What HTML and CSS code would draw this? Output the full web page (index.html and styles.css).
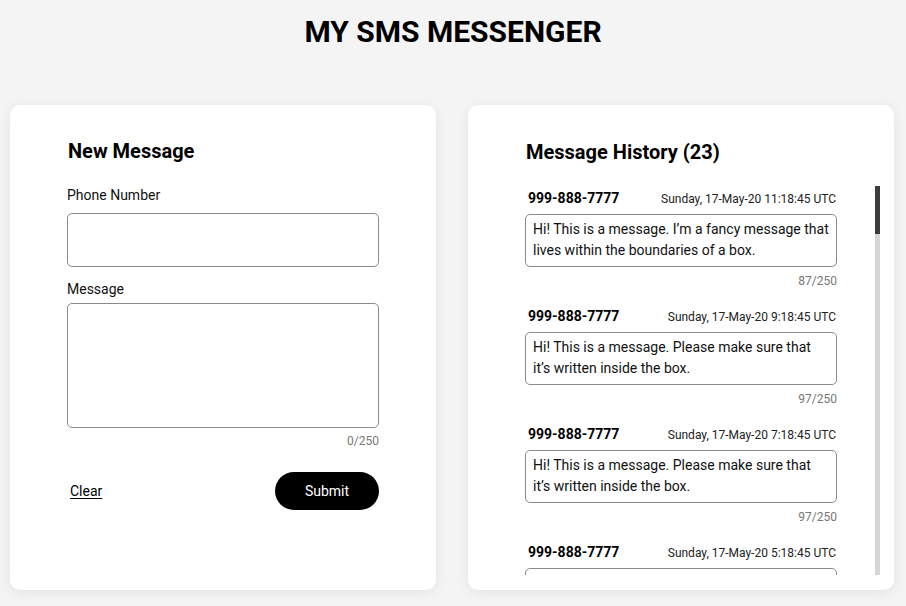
FILE: index.html
```html
<!DOCTYPE html>
<html lang="en">
<head>
<meta charset="utf-8">
<title>My SMS Messenger</title>
<link rel="stylesheet" href="styles.css">
</head>
<body>
<h1 class="page-title">MY SMS MESSENGER</h1>
<main class="panels">
  <section class="card card-form">
    <h2 class="card-title">New Message</h2>
    <label class="field-label label-phone" for="phone">Phone Number</label>
    <input class="text-input" id="phone" type="text">
    <label class="field-label label-message" for="message">Message</label>
    <textarea class="text-area" id="message"></textarea>
    <div class="counter counter-form">0/250</div>
    <div class="actions">
      <button class="btn-clear" type="button">Clear</button>
      <button class="btn-submit" type="button">Submit</button>
    </div>
  </section>
  <section class="card card-history">
    <h2 class="card-title">Message History (23)</h2>
    <div class="history-body">
      <div class="history-list">
        <article class="msg"><div class="msg-head"><span class="msg-phone">999-888-7777</span><span class="msg-date">Sunday, 17-May-20 11:18:45 UTC</span></div><div class="msg-body">Hi! This is a message. I’m a fancy message that lives within the boundaries of a box.</div><div class="counter">87/250</div></article>
        <article class="msg"><div class="msg-head"><span class="msg-phone">999-888-7777</span><span class="msg-date">Sunday, 17-May-20 9:18:45 UTC</span></div><div class="msg-body">Hi! This is a message. Please make sure that it’s written inside the box.</div><div class="counter">97/250</div></article>
        <article class="msg"><div class="msg-head"><span class="msg-phone">999-888-7777</span><span class="msg-date">Sunday, 17-May-20 7:18:45 UTC</span></div><div class="msg-body">Hi! This is a message. Please make sure that it’s written inside the box.</div><div class="counter">97/250</div></article>
        <article class="msg"><div class="msg-head"><span class="msg-phone">999-888-7777</span><span class="msg-date">Sunday, 17-May-20 5:18:45 UTC</span></div><div class="msg-body">Hi! This is a message. Please make sure that it’s written inside the box.</div><div class="counter">97/250</div></article>
      </div>
      <div class="scrollbar" aria-hidden="true"><div class="scrollbar-thumb"></div></div>
    </div>
  </section>
</main>
</body>
</html>
```
FILE: styles.css
```css
* {
  box-sizing: border-box;
}

html, body {
  margin: 0;
  padding: 0;
}

body {
  background: #f4f4f4;
  font-family: Roboto, "Liberation Sans", Arial, sans-serif;
  color: #000;
  height: 606px;
  overflow: hidden;
}

.page-title {
  margin: 0;
  padding-top: 14px;
  font-size: 30px;
  line-height: 35px;
  font-weight: 700;
  text-align: center;
}

.panels {
  display: flex;
  gap: 32px;
  padding: 56px 12px 0 10px;
}

.card {
  width: 426px;
  height: 485px;
  background: #fff;
  border-radius: 10px;
  box-shadow: 0 2px 12px rgba(0, 0, 0, 0.08);
  overflow: hidden;
}

.card-form {
  padding: 34px 57px 0 57px;
}

.card-history {
  padding: 35px 14px 15px 57px;
}

.card-title {
  margin: 0;
  font-size: 20px;
  line-height: 24px;
  font-weight: 700;
  padding-left: 1px;
}

.card-form .card-title {
  margin-bottom: 24px;
}

.card-history .card-title {
  margin-bottom: 22px;
}

.field-label {
  display: block;
  font-size: 14px;
  line-height: 16px;
  color: #111;
}

.label-phone {
  margin-bottom: 10px;
}

.label-message {
  margin-top: 14px;
  margin-bottom: 6px;
}

.text-input,
.text-area {
  display: block;
  width: 100%;
  border: 1px solid #8a8a8a;
  border-radius: 5px;
  background: #fff;
  font-family: inherit;
  font-size: 14px;
  padding: 8px;
  margin: 0;
  outline: none;
  resize: none;
}

.text-input {
  height: 54px;
}

.text-area {
  height: 125px;
}

.counter {
  text-align: right;
  font-size: 12px;
  line-height: 16px;
  color: #777;
}

.counter-form {
  margin-top: 5px;
}

.actions {
  display: flex;
  justify-content: space-between;
  align-items: center;
  margin-top: 23px;
}

.btn-clear {
  background: none;
  border: none;
  padding: 0 3px;
  font-family: inherit;
  font-size: 14px;
  color: #000;
  text-decoration: underline;
  text-underline-offset: 2px;
  cursor: pointer;
}

.btn-submit {
  width: 104px;
  height: 38px;
  border: none;
  border-radius: 19px;
  background: #000;
  color: #fff;
  font-family: inherit;
  font-size: 14px;
  cursor: pointer;
}

.history-body {
  display: flex;
  height: 389px;
}

.history-list {
  width: 350px;
  height: 389px;
  overflow: hidden;
  padding: 2px 38px 0 0;
}

.scrollbar {
  width: 5px;
  height: 389px;
  background: #d6d6d6;
}

.scrollbar-thumb {
  height: 48px;
  background: #3c3c3c;
}

.msg {
  margin-bottom: 17px;
}

.msg-head {
  display: flex;
  justify-content: space-between;
  align-items: baseline;
  padding: 0 1px 0 3px;
  line-height: 20px;
  margin-bottom: 5px;
}

.msg-phone {
  font-size: 14px;
  font-weight: 700;
}

.msg-date {
  font-size: 12px;
  color: #222;
}

.msg-body {
  border: 1px solid #8a8a8a;
  border-radius: 5px;
  padding: 4px 7px 5px 7px;
  font-size: 14px;
  line-height: 21px;
  color: #111;
}

.msg .counter {
  margin-top: 6px;
}
```
